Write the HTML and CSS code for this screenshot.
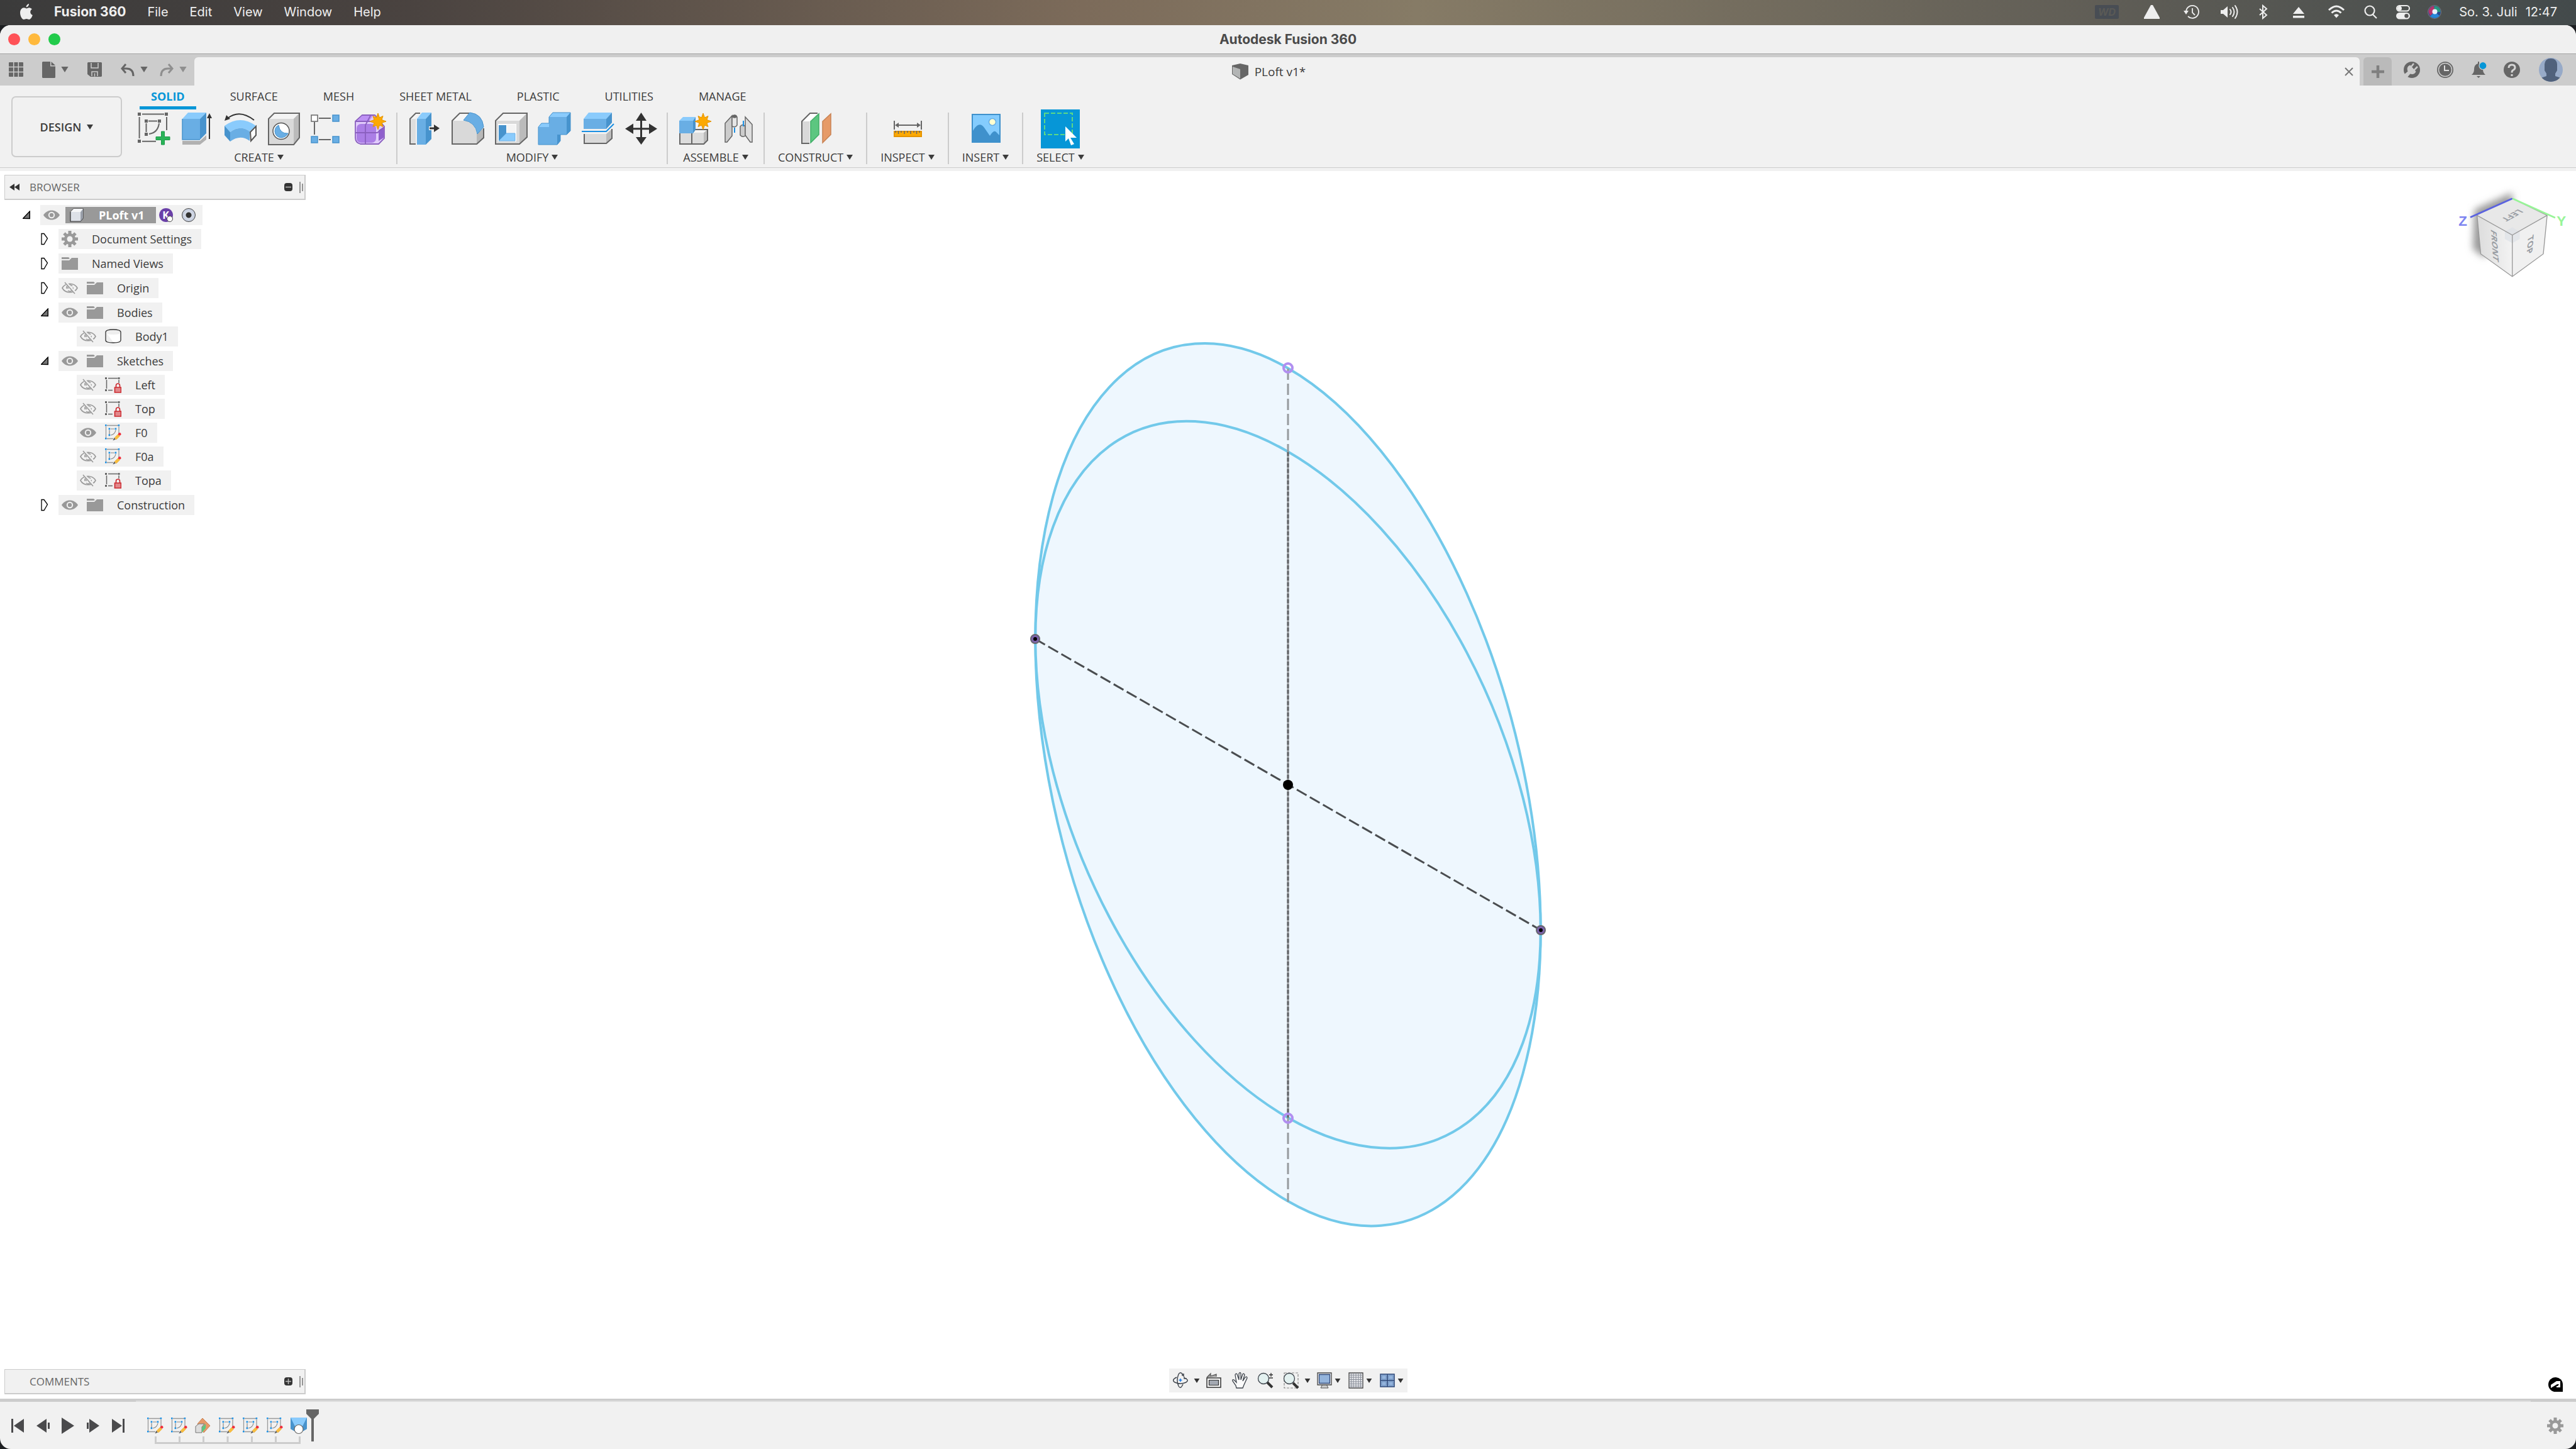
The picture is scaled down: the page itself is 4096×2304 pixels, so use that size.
FILE: index.html
```html
<!doctype html>
<html lang="en">
<head>
<meta charset="utf-8">
<meta name="viewport" content="width=device-width, initial-scale=1.0">
<title>Autodesk Fusion 360</title>
<link rel="stylesheet" href="styles.css">
</head>
<body>

<!-- shared icons -->
<svg class="defs" width="0" height="0">
    <symbol id="i-down" viewBox="0 0 10 8"><path d="M0 0h10L5 8z" fill="currentColor"/></symbol>
    <symbol id="i-eye" viewBox="0 0 26 20">
        <path d="M0 10C6 0 20 0 26 10 20 20 6 20 0 10z" fill="#999"/>
        <circle cx="13" cy="10" r="4.2" fill="#999" stroke="#f1f1f1" stroke-width="2"/>
    </symbol>
    <symbol id="i-hidden" viewBox="0 0 26 20">
        <path d="M1 10C6 1 20 1 25 10 20 19 6 19 1 10z" fill="none" stroke="#999" stroke-width="1.6"/>
        <path d="M8 11a5 5 0 0 1 9-4M10.500 11a2.500 2.500 0 0 1 4-3M18 9a5 5 0 0 1-8 5" fill="none" stroke="#999" stroke-width="1.5"/>
        <path d="M6 1l17 18" stroke="#f1f1f1" stroke-width="4"/>
        <path d="M5 1l16 18" stroke="#999" stroke-width="1.6"/>
    </symbol>
    <symbol id="i-folder" viewBox="0 0 26 22">
        <path d="M0 1h11l2 2-2 1H0zM0 6h12l4-4h10v19H0z" fill="#999"/>
    </symbol>
    <symbol id="i-gear" viewBox="0 0 26 26">
        <g stroke="#999" stroke-width="5"><path d="M13 0v26M0 13h26M4 4l18 18M22 4L4 22"/></g>
        <circle cx="13" cy="13" r="9" fill="#999"/>
        <circle cx="13" cy="13" r="4.500" fill="#f1f1f1"/>
    </symbol>
    <symbol id="i-closed" viewBox="0 0 12 20"><path d="M1 1.500h4L10.500 9 5 18.500H1z" fill="#fff" stroke="#000" stroke-width="1.300"/></symbol>
    <symbol id="i-open" viewBox="0 0 12 14"><path d="M.7 12.300L11.300 1v11.500z" fill="#777" stroke="#000" stroke-width="1.400"/></symbol>
    <symbol id="i-locked" viewBox="0 0 26 26">
        <path d="M5 2.500h15M2.500 5v14M22 5v5M5 21.500h7" stroke="#666" stroke-width="1.500" fill="none"/>
        <path d="M0 1h3v3H0zM20.500 1h3v3h-3zM0 20h3v3H0z" fill="#666"/>
        <path d="M17.500 17v-3a3 3 0 0 1 6 0v3" fill="none" stroke="#cc2b31" stroke-width="1.700"/>
        <path d="M15.500 17h10v8h-10z" fill="#e2888b" stroke="#cc2b31" stroke-width="1.700"/>
    </symbol>
    <symbol id="i-sketch" viewBox="0 0 26 26">
        <path d="M3 1.500h18M1.500 3v18M22 3v12M3 22.500h10" stroke="#999" stroke-width="1.300" fill="none"/>
        <path d="M9 7h6M7 9v7M17 9c-1 5-3 7-8 8" stroke="#888" stroke-width="1.200" fill="none"/>
        <path d="M0 0h2.600v2.600H0zM20.600 0h2.600v2.600h-2.600zM0 21h2.600v2.600H0zM5.600 5.600h2.600v2.600H5.600zM15.600 5.600h2.600v2.600h-2.600zM5.600 15.600h2.600v2.600H5.600z" fill="#1a8fe3"/>
        <path d="M12.500 25.500l2-4.500 2.500 2.500z" fill="#555"/>
        <path d="M15 21l5.500-5.500 3 3L18 24z" fill="#f9bd3f" stroke="#e5a830" stroke-width=".5"/>
        <circle cx="23.200" cy="15.200" r="2.300" fill="#f0303c"/>
    </symbol>
    <symbol id="i-star" viewBox="-13 -13 26 26">
        <path d="M0-13L2.500-6 8-8.500 6-2.500 13 0 6 2.500 8 8.500 2.500 6 0 13-2.500 6-8 8.500-6 2.500-13 0-6-2.500-8-8.500-2.500-6z" fill="#fca903" stroke="#e59400" stroke-width="1"/>
    </symbol>
</svg>

<header class="menubar">
    <nav class="menus">
        <svg class="apple" width="20" height="25" viewBox="0 0 20 25"><path d="M14 0c.3 2.700-1.900 5.300-4.300 5.400C9.400 2.900 11.700.5 14 0zM14.300 6.200c1.900 0 3.600 1 4.600 2.400-4 2.500-3.300 7.800.9 9.500C18.700 21.500 16.700 25 14.300 25c-1.700 0-2.200-1-4.200-1s-2.600 1-4.200 1C3 25 0 19.500 0 14.300 0 9.300 3 6.300 6 6.300c1.800 0 3.100 1.100 4.300 1.100 1.100 0 2.300-1.200 4-1.200z" fill="#eee"/></svg>
        <a class="app" href="#">Fusion 360</a>
        <a href="#">File</a>
        <a href="#">Edit</a>
        <a href="#">View</a>
        <a href="#">Window</a>
        <a href="#">Help</a>
    </nav>
    <div class="status">
        <svg width="48" height="24" viewBox="0 0 48 24"><rect x="5" y="1" width="38" height="22" rx="2" fill="#484d54"/><text class="wd" x="24" y="18" text-anchor="middle">WD</text></svg>
        <svg width="43" height="24" viewBox="0 0 43 24"><path d="M20 1h3l11 20v2H9v-2z" fill="#eee"/></svg>
        <svg width="32" height="24" viewBox="0 0 32 24"><g fill="none" stroke="#eee" stroke-width="1.800"><path d="M7 12a10 10 0 1 1 3 7"/><path d="M17 6v7l4 4"/></g><path d="M3 10h8l-4 6z" fill="#eee"/></svg>
        <svg width="36" height="24" viewBox="0 0 36 24"><path d="M4 9h4l7-6v18l-7-6H4z" fill="#eee"/><g fill="none" stroke="#eee" stroke-width="2" stroke-linecap="round"><path d="M19 8q3 4 0 8M23 5q5 7 0 14M27 2q7 10 0 20"/></g></svg>
        <svg width="19" height="24" viewBox="0 0 19 24"><path d="M4 7l11 10-6 5V2l6 5L4 17" fill="none" stroke="#eee" stroke-width="2"/></svg>
        <svg width="42" height="24" viewBox="0 0 42 24"><path d="M21 4l9 11H12zM12 18h18v3.500H12z" fill="#eee"/></svg>
        <svg width="26" height="24" viewBox="0 0 26 24"><g fill="none" stroke="#eee" stroke-width="3"><path d="M1 9Q13-3 25 9M5.500 13.500q7.500-7 15 0"/></g><path d="M9 17q4-3.500 8 0l-4 4.500z" fill="#eee"/></svg>
        <svg width="30" height="24" viewBox="0 0 30 24"><g fill="none" stroke="#eee" stroke-width="2.200"><circle cx="14" cy="10" r="7.500"/><path d="M19 16l6 6"/></g></svg>
        <svg width="22" height="24" viewBox="0 0 22 24"><rect x="1" y="2" width="20" height="8.500" rx="4.200" fill="none" stroke="#eee" stroke-width="2"/><circle cx="5.500" cy="6.200" r="3.500" fill="#eee"/><rect x="0" y="13" width="22" height="10.500" rx="5.200" fill="#eee"/><circle cx="16.500" cy="18.200" r="3.200" fill="#555"/></svg>
        <svg width="26" height="24" viewBox="0 0 26 24"><circle cx="13" cy="12" r="10.500" fill="#274a8f" stroke="#777" stroke-width="1"/><path d="M3.500 12a9.500 9.500 0 0 1 9-9.500L13 12l-7 6z" fill="#b4346c"/><path d="M12.500 2.500A9.500 9.500 0 0 1 22.500 12L13 12z" fill="#27987f"/><path d="M6 19l7-7 8 6q-7 7-15 1z" fill="#2687d8"/><circle cx="13.500" cy="11.500" r="4" fill="#e8f0fb"/></svg>
        <span>So. 3. Juli</span>
        <span>12:47</span>
    </div>
</header>

<div class="window">
<div class="titlebar">
    <div class="lights"><button class="red" aria-label="Close"></button><button class="amber" aria-label="Minimize"></button><button class="green" aria-label="Zoom"></button></div>
    <h1>Autodesk Fusion 360</h1>
</div>

<div class="quickbar">
    <div class="quick">
        <button aria-label="Data panel"><svg width="23" height="23" viewBox="0 0 23 23"><rect width="23" height="23" rx="1" fill="#666"/><path d="M7.700 0v23M15.300 0v23M0 7.500h23M0 15.500h23" stroke="#ccc" stroke-width="1.500"/></svg></button>
        <button class="file" aria-label="File"><svg width="21" height="26" viewBox="0 0 21 26"><path d="M1 0h12v7.500h8V25l-1 1H1l-1-1V1zM14.500 0L21 6h-6.500z" fill="#666"/></svg><svg width="12" height="9"><use href="#i-down"/></svg></button>
        <button class="save" aria-label="Save"><svg width="23" height="23" viewBox="0 0 23 23"><path d="M1 0h21l1 1v21l-1 1H5l-5-4V1z" fill="#666"/><path d="M6 1v8h11V1M7 22v-7h9v7M11.500 17.500v5" fill="none" stroke="#ccc" stroke-width="1.500"/></svg></button>
        <button class="undo" aria-label="Undo"><svg width="22" height="20" viewBox="0 0 22 20"><path d="M8 1L2 8l6 7M2 8h7q11 0 11 12" fill="none" stroke="#666" stroke-width="3"/></svg><svg width="12" height="9"><use href="#i-down"/></svg></button>
        <button class="redo" aria-label="Redo"><svg width="22" height="20" viewBox="0 0 22 20"><path d="M14 1l6 7-6 7M20 8h-7Q2 8 2 20" fill="none" stroke="#8f8f8f" stroke-width="3"/></svg><svg width="12" height="9"><use href="#i-down"/></svg></button>
    </div>
    <div class="doctab">
        <svg width="26" height="26" viewBox="0 0 26 26"><path d="M0 3L13 0l13 3v15l-13 7.500L0 17z" fill="#666"/><path d="M1 5l12 4v15L1 16.500z" fill="#b3b5b5"/></svg>
        <span>PLoft v1*</span>
        <button class="close" aria-label="Close tab"><svg width="14" height="14" viewBox="0 0 14 14"><path d="M1 1l12 12M13 1L1 13" stroke="#777" stroke-width="2"/></svg></button>
    </div>
    <div class="account">
        <button class="newtab" aria-label="New tab"><svg width="20" height="20" viewBox="0 0 20 20"><path d="M10 0v20M0 10h20" stroke="#808080" stroke-width="4.500"/></svg></button>
        <button aria-label="Extensions"><svg width="26" height="26" viewBox="0 0 26 26"><circle cx="13" cy="13" r="13" fill="#666"/><path d="M2 21l6-5q-3-7 2-9l8 9q-2 4-8 2l-5 6M12 8l4-5M17 13l5-5" fill="#ccc" stroke="#ccc" stroke-width="2.500"/></svg></button>
        <button aria-label="Job status"><svg width="26" height="26" viewBox="0 0 26 26"><circle cx="13" cy="13" r="12" fill="#666" stroke="#666" stroke-width="2"/><circle cx="13" cy="13" r="10.500" fill="none" stroke="#ccc" stroke-width="1.500"/><path d="M12 6v8h7" fill="none" stroke="#ddd" stroke-width="2"/></svg></button>
        <button aria-label="Notifications"><svg width="26" height="26" viewBox="0 0 26 26"><path d="M12 0h2v3q6 2 6 9 0 6 4 9H2q4-3 4-9 0-7 6-9zM10 23h6l-3 3z" fill="#666"/><circle cx="20" cy="6.500" r="6" fill="#0696d7" stroke="#ccc" stroke-width="1.200"/></svg></button>
        <button aria-label="Help"><svg width="26" height="26" viewBox="0 0 26 26"><circle cx="13" cy="13" r="13" fill="#666"/><path d="M8 10q0-5 5-5t5 4.500q0 2.500-3 4-2 1-2 4" fill="none" stroke="#d5d5d5" stroke-width="3"/><path d="M11.500 20h3v3h-3z" fill="#d5d5d5"/></svg></button>
        <button class="avatar" aria-label="Account"><svg width="38" height="38" viewBox="0 0 38 38"><defs><clipPath id="face"><circle cx="19" cy="19" r="19"/></clipPath></defs><g clip-path="url(#face)"><path d="M0 0h38v38H0z" fill="#97aac8"/><path d="M9 10q1-9 10-9t10 9v10l-3 5v4l12 4v6H0v-6l12-4v-4l-3-5z" fill="#50617c"/></g></svg></button>
    </div>
</div>

<div class="ribbon">
    <button class="workspace">DESIGN <svg width="10" height="8"><use href="#i-down"/></svg></button>
    <div class="tools">
        <nav class="tabs">
            <a class="active" href="#">SOLID</a>
            <a href="#">SURFACE</a>
            <a href="#">MESH</a>
            <a href="#">SHEET METAL</a>
            <a href="#">PLASTIC</a>
            <a href="#">UTILITIES</a>
            <a href="#">MANAGE</a>
        </nav>
        <div class="panels">
            <section class="panel first">
                <div class="icons">
                    <button aria-label="Create sketch"><svg viewBox="0 0 52 52"><g fill="none" stroke="#666" stroke-width="2"><path d="M7 2.600h35M2.600 7v34M46 7v21M7 45.800h22M17 13.500h14M13.500 17v14M34 17q-2 15-16 17"/></g><path d="M0 0h5v5H0zM43 0h5v5h-5zM0 43h5v5H0zM11 11h5v5h-5zM32 11h5v5h-5zM11 32h5v5h-5z" fill="#666"/><path d="M37.500 30h5v8.500H51v5h-8.500V51h-5v-7.500H29v-5h8.500z" fill="#29b357" stroke="#1d9a49"/></svg></button>
                    <button aria-label="Extrude"><svg viewBox="0 0 52 52"><path d="M2 45h28l10-9v7l-10 8H2z" fill="#b1b1b1"/><path d="M2 10h28v33H2z" fill="#69aee4"/><path d="M2 10L11 0h29L30 10z" fill="#8acbfc"/><path d="M30 10L40 0v33L30 43z" fill="#4793cd"/><path d="M2 10v33h28" fill="none" stroke="#4793cd" stroke-width="1.500"/><path d="M45 42V8" stroke="#333" stroke-width="2"/><path d="M41 9l4-8 4 8z" fill="#333"/></svg></button>
                    <button aria-label="Revolve"><svg viewBox="0 0 52 52"><path d="M0 21Q25 3 50 21L40 30Q25 19 9 31z" fill="#8acbfc"/><path d="M9 31Q25 19 40 30v15Q25 34 9 46z" fill="#69aee4"/><path d="M0 21l9 10v15L0 36z" fill="#4793cd"/><path d="M41 31l9-9v14l-8 9z" fill="#fff" stroke="#555" stroke-width="2"/><path d="M47 12Q24-6 5 9" fill="none" stroke="#333" stroke-width="2"/><path d="M0 13l3-9 6 6z" fill="#333"/></svg></button>
                    <button aria-label="Hole"><svg viewBox="0 0 52 52"><path d="M1 10L10 1h40v39L41 51H1z" fill="#d9d9d9"/><path d="M1 10L10 1h40l-9 9z" fill="#f4f4f4"/><path d="M41 10l9-9v39L41 51z" fill="#bbb"/><path d="M1 10L10 1h40v39L41 51H1z" fill="none" stroke="#666" stroke-width="2"/><circle cx="21" cy="29.500" r="13" fill="#fff" stroke="#555" stroke-width="1.500"/><path d="M17 20q2 14 15 13-4 7-11 7-9-1-10-10 0-7 6-10z" fill="#69aee4" stroke="#4793cd"/></svg></button>
                    <button aria-label="Pattern"><svg viewBox="0 0 52 52"><path d="M12 9h19M5 15v20M12 43h19" stroke="#666" stroke-width="2"/><path d="M0 4h10v10H0z" fill="#fff" stroke="#666" stroke-width="1.500"/><path d="M34 4h10v10H34zM0 38h10v10H0zM34 38h10v10H34z" fill="#69aee4" stroke="#4793cd" stroke-width="1.500"/></svg></button>
                    <button aria-label="Create form"><svg viewBox="0 0 52 52"><path d="M1 14L12 4h20l15 18v19l-9 9H9q-8-2-8-10z" fill="#e0cbfb" stroke="#8a5fbf" stroke-width="1.800"/><path d="M5 12l7-7h17l-7 10H5z" fill="#bd90f4"/><rect x="3" y="18" width="31" height="30" rx="7" fill="#ab7ee6"/><path d="M38 28l8-5v17l-8 5z" fill="#8f5fcd"/><path d="M1 32h35l11-9M17 50V20l8-15M2 14h30" fill="none" stroke="#8a5fbf" stroke-width="1.800"/><use href="#i-star" x="24" y="1" width="26" height="26"/></svg></button>
                </div>
                <button class="label">CREATE <svg width="10" height="8"><use href="#i-down"/></svg></button>
            </section>
            <section class="panel">
                <div class="icons">
                    <button aria-label="Press pull"><svg viewBox="0 0 52 52"><path d="M12 50H3V10l9-9h7l-8 9h1z" fill="#dedede"/><path d="M3 10l9-9h7l-8 9z" fill="#f4f4f4"/><path d="M12 50H3V10l9-9h7" fill="none" stroke="#666" stroke-width="2"/><path d="M14 10h14v41H14z" fill="#69aee4"/><path d="M14 10l8-10h15l-9 10z" fill="#8acbfc"/><path d="M28 10l9-10v42l-9 9z" fill="#4793cd"/><path d="M33 25h10" stroke="#fff" stroke-width="6"/><path d="M34 25h9" stroke="#333" stroke-width="3"/><path d="M41 19l9 6-9 6z" fill="#333"/></svg></button>
                    <button aria-label="Fillet"><svg viewBox="0 0 52 52"><path d="M1 13L13 1h14l-8 11q17 2 21 21l11-9v16L40 51H1z" fill="#d9d9d9"/><path d="M1 13L13 1h14l-8 12z" fill="#f6f6f6"/><path d="M40 34l11-9v15L40 50z" fill="#b8b8b8"/><path d="M28 1H13L1 13v37h39l11-10V25" fill="none" stroke="#666" stroke-width="2"/><path d="M29 0q20 2 22 23l-10 11Q38 15 19 12z" fill="#69aee4" stroke="#4793cd"/></svg></button>
                    <button aria-label="Shell"><svg viewBox="0 0 52 52"><path d="M1 13L13 1h38v38L39 50H1z" fill="#d9d9d9"/><path d="M1 13L13 1h38L39 13z" fill="#f4f4f4"/><path d="M39 13L51 1v38L39 50z" fill="#bbb"/><path d="M1 13L13 1h38v38L39 50H1z" fill="none" stroke="#666" stroke-width="2"/><path d="M5 18h29v28H5z" fill="#fff"/><path d="M6 20h12v13L6 45z" fill="#4793cd"/><path d="M6 45l12-12h14v12z" fill="#8acbfc" stroke="#69aee4"/><path d="M19 19h14v13H19z" fill="#f4f4f4"/></svg></button>
                    <button aria-label="Combine"><svg viewBox="0 0 52 52"><path d="M0 23l5-6h12V7l6-7h28v29l-6 6H35v10l-5 6H0z" fill="#69aee4"/><path d="M17 7l6-7h28l-6 7zM0 23l5-6h12v6z" fill="#8acbfc"/><path d="M45 7l6-7v29l-6 6zM30 35h5v10l-5 6z" fill="#4793cd"/><path d="M0 23l5-6h12V7l6-7h28v29l-6 6H35v10l-5 6H0z" fill="none" stroke="#4793cd"/></svg></button>
                    <button aria-label="Split body"><svg viewBox="0 0 52 52"><path d="M3 10h36v16H3z" fill="#69aee4"/><path d="M3 10l8-10h37l-9 10z" fill="#8acbfc"/><path d="M39 10l9-10v16l-9 10z" fill="#4793cd"/><path d="M0 30h39l12-12" fill="none" stroke="#1a8fe3" stroke-width="2"/><path d="M4 34h35v15H4z" fill="#d9d9d9"/><path d="M39 34l9-8v15l-9 8z" fill="#bbb"/><path d="M4 34v15h35l9-8V26" fill="none" stroke="#666" stroke-width="2"/></svg></button>
                    <button aria-label="Move"><svg viewBox="0 0 52 52"><path d="M25.500 8v36M8 25.800h36" stroke="#333" stroke-width="3"/><path d="M17 13L25.500 0 34 13zM17 39l8.500 12L34 39zM13 17.500L0 25.800 13 34zM38 17.500l13 8.300L38 34z" fill="#333"/></svg></button>
                </div>
                <button class="label">MODIFY <svg width="10" height="8"><use href="#i-down"/></svg></button>
            </section>
            <section class="panel">
                <div class="icons">
                    <button aria-label="New component"><svg viewBox="0 0 52 52"><path d="M2 32h19v18H2zM21 32h19v18H21z" fill="#dcdcdc"/><path d="M21 32l5-5h20l-6 5z" fill="#f4f4f4"/><path d="M40 32l6-5v17l-6 6z" fill="#bbb"/><path d="M2 32v18h38l6-6V27H26l-5 6v17" fill="none" stroke="#666" stroke-width="2"/><path d="M1 13h22v20H1z" fill="#69aee4"/><path d="M1 13l6-6h20l-4 6z" fill="#8acbfc"/><path d="M23 13l4-6v20l-4 6z" fill="#4793cd"/><use href="#i-star" x="26" y="1" width="26" height="26"/></svg></button>
                    <button aria-label="Joint"><svg viewBox="0 0 52 52"><g stroke="#666" stroke-width="1.500"><path d="M5 17L16 5v32L8 47H5z" fill="#ccc"/><path d="M16 7q4-5 8 0v13q-2 4-8 2z" fill="#e6e6e6"/><ellipse cx="20" cy="6" rx="3" ry="2" fill="#666"/><path d="M29 22q4-5 8 0v15q-4 3-8-1z" fill="#ccc"/><path d="M37 7l11 12v28h-3l-8-11z" fill="#dedede"/></g><path d="M20 24v8M34 13v9" stroke="#1a8fe3" stroke-width="2"/></svg></button>
                </div>
                <button class="label">ASSEMBLE <svg width="10" height="8"><use href="#i-down"/></svg></button>
            </section>
            <section class="panel">
                <div class="icons">
                    <button aria-label="Construction plane"><svg viewBox="0 0 52 52"><path d="M3 14h12v35H3z" fill="#d9d9d9"/><path d="M3 14L16 1h12L15 14z" fill="#fff"/><path d="M15 49H3V14L16 1h12" fill="none" stroke="#666" stroke-width="2"/><path d="M17 14L30 2v33L17 48z" fill="#5cc680" stroke="#3fae66" stroke-width="1.500"/><path d="M36 14L49 2v33L36 48z" fill="#e69a68" stroke="#c98253" stroke-width="1.500"/></svg></button>
                </div>
                <button class="label">CONSTRUCT <svg width="10" height="8"><use href="#i-down"/></svg></button>
            </section>
            <section class="panel">
                <div class="icons">
                    <button aria-label="Measure"><svg viewBox="0 0 52 52"><path d="M4 13v14M47 13v14M8 20h35" stroke="#666" stroke-width="2"/><path d="M5 20l6-4v8zM46 20l-6-4v8z" fill="#666"/><path d="M4 30h43v8H4z" fill="#fca903" stroke="#e59400" stroke-width="2"/><path d="M6 29v3M10.500 29v5M15 29v3M20 29v5M25 29v3M30 29v5M35 29v3M39.500 29v5M44 29v3" stroke="#666" stroke-width="1.500"/></svg></button>
                </div>
                <button class="label">INSPECT <svg width="10" height="8"><use href="#i-down"/></svg></button>
            </section>
            <section class="panel">
                <div class="icons">
                    <button aria-label="Insert image"><svg viewBox="0 0 52 52"><path d="M3 2h46v46H3z" fill="#84ccfe"/><path d="M3 33C11 16 18 17 23 24l9 13c5-8 8-9 11-5l6 6v10H3z" fill="#3f91cc"/><path d="M4 3h44v44H4z" fill="none" stroke="#3f91cc" stroke-width="2"/><circle cx="36" cy="15" r="5.500" fill="#ffffd0" stroke="#69aee4" stroke-width="1.500"/></svg></button>
                </div>
                <button class="label">INSERT <svg width="10" height="8"><use href="#i-down"/></svg></button>
            </section>
            <section class="panel last">
                <div class="icons">
                    <button class="select" aria-label="Select"><svg viewBox="0 0 62 62"><path d="M6 6h44v34H6z" fill="none" stroke="#5cd886" stroke-width="2" stroke-dasharray="7 3"/><path d="M39 27l18 18H47l6 10-5 2-4-11-5 5z" fill="#fff"/></svg></button>
                </div>
                <button class="label">SELECT <svg width="10" height="8"><use href="#i-down"/></svg></button>
            </section>
        </div>
    </div>
</div>

<main class="viewport">
    <!-- the two profiles share the horizontal axis, only the height differs -->
    <svg class="sketch" viewBox="0 2 4096 1952">
        <g class="profile">
            <circle r="1" transform="matrix(401.700 231.700 0 662.300 2048 977.700)"/>
            <circle r="1" transform="matrix(401.700 231.700 0 529.500 2048 977.700)"/>
        </g>
        <path class="axis light" d="M2048 316V449M2048 1507V1641"/>
        <path class="axis base" d="M2048 449V1507"/>
        <path class="axis fine" d="M2048 449V1507"/>
        <path class="axis" d="M1646 746L2450 1209"/>
        <g class="handle"><circle cx="2048" cy="315" r="7"/><circle cx="2048" cy="1508" r="7"/></g>
        <g class="endpoint"><circle cx="1646" cy="746" r="7"/><circle cx="2450" cy="1209" r="7"/></g>
        <g><circle cx="1646" cy="746" r="3"/><circle cx="2450" cy="1209" r="3"/><circle cx="2048" cy="978" r="8"/></g>
    </svg>

    <div class="side">
        <div class="browser">
            <div class="palette">
                <svg class="collapse" width="16" height="11" viewBox="0 0 16 11"><path d="M8 0v11L0 5.500zM16 0v11L8 5.500z" fill="#333"/></svg>
                <h2>BROWSER</h2>
                <button aria-label="Collapse all"><svg width="13" height="13" viewBox="0 0 13 13"><rect width="13" height="13" rx="4" fill="#333"/><path d="M2 6.500h9" stroke="#bbb" stroke-width="1.500"/></svg></button>
                <svg class="grip" width="6" height="18" viewBox="0 0 6 18"><path d="M1 0v18M5 3v12" stroke="#777" stroke-width="1.500"/></svg>
            </div>
            <ul class="tree">
                <li>
                    <div class="node"><button class="twist" aria-label="Collapse"><svg width="12" height="14"><use href="#i-open"/></svg></button>
                        <div class="item root"><svg width="26" height="20"><use href="#i-eye"/></svg>
                            <span class="current"><svg width="22" height="22" viewBox="0 0 22 22"><path d="M1 6l5-5h15v15l-4 5H1z" fill="#dde1e8" stroke="#333" stroke-width="1.200"/><path d="M17 21V6l4-5v15z" fill="#9aa0aa"/><path d="M1 6l5-5h15l-4 5z" fill="#f6f7f9"/></svg>PLoft v1</span>
                            <span class="badge">K</span>
                            <input type="radio" checked aria-label="Activate component">
                        </div>
                    </div>
                    <ul>
                        <li><div class="node"><button class="twist" aria-label="Expand"><svg width="12" height="20"><use href="#i-closed"/></svg></button><div class="item"><svg width="26" height="26"><use href="#i-gear"/></svg><span>Document Settings</span></div></div></li>
                        <li><div class="node"><button class="twist" aria-label="Expand"><svg width="12" height="20"><use href="#i-closed"/></svg></button><div class="item"><svg width="26" height="22"><use href="#i-folder"/></svg><span>Named Views</span></div></div></li>
                        <li><div class="node"><button class="twist" aria-label="Expand"><svg width="12" height="20"><use href="#i-closed"/></svg></button><div class="item"><svg width="26" height="20"><use href="#i-hidden"/></svg><svg width="26" height="22"><use href="#i-folder"/></svg><span>Origin</span></div></div></li>
                        <li><div class="node"><button class="twist" aria-label="Collapse"><svg width="12" height="14"><use href="#i-open"/></svg></button><div class="item"><svg width="26" height="20"><use href="#i-eye"/></svg><svg width="26" height="22"><use href="#i-folder"/></svg><span>Bodies</span></div></div>
                            <ul class="leaf">
                                <li><div class="item"><svg width="26" height="20"><use href="#i-hidden"/></svg><svg width="26" height="24" viewBox="0 0 26 24"><path d="M1 5Q1 1 13 1t12 4v13q0 4-12 4T1 18z" fill="#eee" stroke="#333" stroke-width="1.300"/><path d="M2 6q0 3 11 3t11-3v12q-1 3-11 3z" fill="#fff"/></svg><span>Body1</span></div></li>
                            </ul>
                        </li>
                        <li><div class="node"><button class="twist" aria-label="Collapse"><svg width="12" height="14"><use href="#i-open"/></svg></button><div class="item"><svg width="26" height="20"><use href="#i-eye"/></svg><svg width="26" height="22"><use href="#i-folder"/></svg><span>Sketches</span></div></div>
                            <ul class="leaf">
                                <li><div class="item"><svg width="26" height="20"><use href="#i-hidden"/></svg><svg width="26" height="26"><use href="#i-locked"/></svg><span>Left</span></div></li>
                                <li><div class="item"><svg width="26" height="20"><use href="#i-hidden"/></svg><svg width="26" height="26"><use href="#i-locked"/></svg><span>Top</span></div></li>
                                <li><div class="item"><svg width="26" height="20"><use href="#i-eye"/></svg><svg width="26" height="26"><use href="#i-sketch"/></svg><span>F0</span></div></li>
                                <li><div class="item"><svg width="26" height="20"><use href="#i-hidden"/></svg><svg width="26" height="26"><use href="#i-sketch"/></svg><span>F0a</span></div></li>
                                <li><div class="item"><svg width="26" height="20"><use href="#i-hidden"/></svg><svg width="26" height="26"><use href="#i-locked"/></svg><span>Topa</span></div></li>
                            </ul>
                        </li>
                        <li><div class="node"><button class="twist" aria-label="Expand"><svg width="12" height="20"><use href="#i-closed"/></svg></button><div class="item"><svg width="26" height="20"><use href="#i-eye"/></svg><svg width="26" height="22"><use href="#i-folder"/></svg><span>Construction</span></div></div></li>
                    </ul>
                </li>
            </ul>
        </div>
        <div class="palette comments">
            <h2>COMMENTS</h2>
            <button aria-label="Open comments"><svg width="13" height="13" viewBox="0 0 13 13"><rect width="13" height="13" rx="4" fill="#333"/><path d="M2 6.500h9M6.500 2v9" stroke="#bbb" stroke-width="1.500"/></svg></button>
            <svg class="grip" width="6" height="18" viewBox="0 0 6 18"><path d="M1 0v18M5 3v12" stroke="#777" stroke-width="1.500"/></svg>
        </div>
    </div>

    <div class="navbar">
        <button class="wide" aria-label="Orbit"><svg width="24" height="26" viewBox="0 0 24 26"><g fill="none" stroke="#3d434b" stroke-width="1.400"><path d="M16 4Q12-2 9 3 5 13 9 22q3 5 6-1l1-2M6 8Q-3 12 3 16q9 4 18 0 4-3 1-5l-3-2M14 4l3 2V2M18 7v3h4"/></g><path d="M12 10v5M9.500 12.500h5" stroke="#1a78e3" stroke-width="1.500"/></svg><svg width="10" height="7"><use href="#i-down"/></svg></button>
        <button aria-label="Look at"><svg width="24" height="26" viewBox="0 0 24 26"><path d="M1 8l6-6v4l9-3v4" fill="#999" stroke="#555" stroke-width="1.200"/><path d="M1 9h22v15H1z" fill="#f7f7f7" stroke="#333" stroke-width="1.500"/><path d="M4.500 12.500h15v8h-15z" fill="#a3a8b1" stroke="#333" stroke-width="1.200"/></svg></button>
        <button aria-label="Pan"><svg width="24" height="26" viewBox="0 0 24 26"><path d="M7 25L6 21 1 14q-1-3 2-2l4 4L5 4q1-3 3-1l3 9V2q2-3 3 0v10l3-9q2-2 3 1l-3 10 4-6q3-2 3 1l-5 11-2 5z" fill="#fbfbfb" stroke="#3d434b" stroke-width="1.300"/></svg></button>
        <button aria-label="Zoom"><svg width="24" height="26" viewBox="0 0 24 26"><path d="M15 16l8 8" stroke="#333" stroke-width="4"/><circle cx="9" cy="10" r="8.500" fill="#e3f1f0" stroke="#3d434b" stroke-width="1.300"/><path d="M18 4h6M21 1v6M18 9h6" stroke="#333" stroke-width="1.300"/></svg></button>
        <button class="wide" aria-label="Fit"><svg width="24" height="26" viewBox="0 0 24 26"><path d="M1 1h22v24H1z" fill="none" stroke="#888" stroke-width="1.200" stroke-dasharray="4 2"/><path d="M15 17l8 8" stroke="#333" stroke-width="4"/><circle cx="9" cy="10" r="8.500" fill="#e3f1f0" stroke="#3d434b" stroke-width="1.300"/></svg><svg width="10" height="7"><use href="#i-down"/></svg></button>
        <button class="tight" aria-label="Display settings"><svg width="24" height="26" viewBox="0 0 24 26"><path d="M9 19h6l3 6H6z" fill="#ccc" stroke="#555"/><path d="M1 1h22v19H1z" fill="#f8f8f8" stroke="#444" stroke-width="1.300"/><path d="M3.500 3.500h17v14h-17z" fill="#94b4dc" stroke="#2d4676" stroke-width="1.300"/></svg><svg width="10" height="7"><use href="#i-down"/></svg></button>
        <button class="tight" aria-label="Grid and snaps"><svg width="24" height="26" viewBox="0 0 24 26"><path d="M1 1h22v24H1z" fill="#e8e9ec" stroke="#444" stroke-width="1.300"/><path d="M4.500 1v24M8 1v24M12 1v24M16 1v24M19.500 1v24M1 4.500h22M1 8h22M1 11.500h22M1 15h22M1 18.500h22M1 22h22" stroke="#888d98"/></svg><svg width="10" height="7"><use href="#i-down"/></svg></button>
        <button class="tight" aria-label="Viewports"><svg width="24" height="22" viewBox="0 0 24 22"><path d="M1 1h22v20H1zM12 1v20M1 11h22" fill="#94b4dc" stroke="#2d4676" stroke-width="1.500"/><path d="M3 3h7v6H3zM14 3h7v6h-7zM3 13h7v6H3zM14 13h7v6h-7z" fill="none" stroke="#6f90bf"/></svg><svg width="10" height="7"><use href="#i-down"/></svg></button>
    </div>

    <div class="corner">
        <svg class="viewcube" width="224" height="176" viewBox="0 0 840 660">
            <defs>
                <filter id="soft" x="-30%" y="-30%" width="160%" height="160%"><feGaussianBlur stdDeviation="22"/></filter>
                <linearGradient id="left" x1="0" x2="1"><stop offset="0" stop-color="#dcdcdc"/><stop offset="1" stop-color="#f3f3f3"/></linearGradient>
            </defs>
            <path d="M460 65L235 165 225 400 290 450 460 300z" fill="#999" filter="url(#soft)"/>
            <path d="M460 100L668 200 460 318 250 200z" fill="#e8e8e8"/>
            <path d="M250 200l210 118v247L272 430z" fill="url(#left)"/>
            <path d="M668 200L460 318v247l185-135z" fill="#f0f0f0"/>
            <path d="M460 272l44 25v44l-44 25-44-25v-44z" fill="#dde1e7" opacity=".7"/>
            <path d="M668 200L460 318 250 200l22 230 188 135 185-135zM460 318v247M460 100l208 100" fill="none" stroke="#999" stroke-width="5"/>
            <path d="M210 212L460 100" stroke="#5a62e0" stroke-width="10"/>
            <path d="M462 100l254 115" stroke="#98f598" stroke-width="10"/>
            <g class="faces">
                <text transform="matrix(-.87 .49 -.87 -.43 460 200)" y="18">LEFT</text>
                <text transform="matrix(.08 1 -.87 -.49 355 382)" y="18">FRONT</text>
                <text transform="matrix(-.07 1 -.87 .49 566 376)" y="18">TOP</text>
            </g>
            <text class="z" x="165" y="262">Z</text>
            <text class="y" x="753" y="262">Y</text>
        </svg>
        <button class="assist" aria-label="Assistant"><svg width="23" height="23" viewBox="0 0 23 23"><path d="M11.500 0A11.500 11.500 0 0 1 23 11.500V23H11.500a11.500 11.500 0 0 1 0-23z" fill="#000"/><path d="M4 12l9-6h6v10h-6v-2h2l2-3h-3l-10 6z" fill="#fff"/></svg></button>
    </div>
</main>

<footer class="timeline">
    <div class="playback">
        <button aria-label="First"><svg width="20" height="22" viewBox="0 0 20 22"><path d="M0 0h3v22H0zM20 0v22L4 11z" fill="#4a4a4c"/></svg></button>
        <button aria-label="Previous"><svg width="20" height="22" viewBox="0 0 20 22"><path d="M16 0v22L0 11zM18 6h3v10h-3z" fill="#4a4a4c"/></svg></button>
        <button aria-label="Play"><svg width="20" height="26" viewBox="0 0 20 26"><path d="M0 0l20 13L0 26z" fill="#4a4a4c"/></svg></button>
        <button aria-label="Next"><svg width="20" height="22" viewBox="0 0 20 22"><path d="M4 0v22l16-11zM0 6h3v10H0z" fill="#4a4a4c"/></svg></button>
        <button aria-label="Last"><svg width="20" height="22" viewBox="0 0 20 22"><path d="M17 0h3v22h-3zM0 0v22l16-11z" fill="#4a4a4c"/></svg></button>
    </div>
    <div class="history">
        <div class="features">
            <div class="steps">
                <button aria-label="Sketch"><svg width="26" height="26"><use href="#i-sketch"/></svg></button>
                <button aria-label="Sketch"><svg width="26" height="26"><use href="#i-sketch"/></svg></button>
                <button aria-label="Plane"><svg width="26" height="26" viewBox="0 0 26 26"><path d="M12 1l12 12-10 11L4 10z" fill="#e69a68" stroke="#c98253"/><path d="M1 14l5-4h9l-4 5v9H1z" fill="#ddd" stroke="#777"/><path d="M11 16l6-6v7l-6 7z" fill="#5cc680"/></svg></button>
                <button aria-label="Sketch"><svg width="26" height="26"><use href="#i-sketch"/></svg></button>
                <button aria-label="Sketch"><svg width="26" height="26"><use href="#i-sketch"/></svg></button>
                <button aria-label="Sketch"><svg width="26" height="26"><use href="#i-sketch"/></svg></button>
                <button aria-label="Loft"><svg width="26" height="26" viewBox="0 0 26 26"><path d="M0 0h26v18l-7 4H7l-7-4z" fill="#69aee4"/><path d="M0 0h26l-7 14H7z" fill="#8acbfc"/><path d="M0 0l7 14v8l-7-4zM26 0l-7 14v8l7-4z" fill="#4793cd"/><circle cx="13" cy="18.500" r="7" fill="#fff" stroke="#666" stroke-width="1.200"/></svg></button>
            </div>
            <svg width="232" height="12" viewBox="0 0 232 12"><path d="M1.500 0v10.500h229V0M39.500 0v10M77.500 0v10M116 0v10M154.500 0v10M192.500 0v10" fill="none" stroke="#ccc" stroke-width="3"/></svg>
        </div>
        <svg class="marker" width="20" height="51" viewBox="0 0 20 51"><path d="M0 0h20v7l-8 8v36H8V15L0 7z" fill="#666"/></svg>
    </div>
    <div class="settings"><button aria-label="Timeline settings"><svg width="26" height="26"><use href="#i-gear"/></svg></button></div>
</footer>
</div>

</body>
</html>
```
FILE: styles.css
```css
* {
    box-sizing: border-box;
}
body {
    margin: 0;
    min-height: 100vh;
    display: flex;
    flex-direction: column;
    background: #1d1f22;
    color: #3c3c3c;
    font: 18px/22px "Open Sans", "Noto Sans", sans-serif;
}
button {
    display: flex;
    align-items: center;
    margin: 0;
    padding: 0;
    border: 0;
    background: none;
    color: inherit;
    font: inherit;
}
svg {
    display: block;
    flex: none;
    overflow: visible;
}
a {
    color: inherit;
    text-decoration: none;
}
h1, h2, ul {
    margin: 0;
    padding: 0;
    list-style: none;
    font-weight: normal;
}
.defs {
    position: absolute;
}

/* system menu bar */
.menubar {
    height: 40px;
    padding: 0 30px 3px 32px;
    display: flex;
    justify-content: space-between;
    align-items: center;
    background: linear-gradient(90deg, #3b3b3b 0%, #4a4340 16%, #7c6b5a 42%, #867b66 55%, #625f57 80%, #434a4b 100%);
    color: #efefef;
    font: 20px/26px Inter, sans-serif;
}
.menus {
    display: flex;
    align-items: center;
    gap: 34px;
}
.app {
    font-size: 21px;
    font-weight: 700;
}
.status {
    display: flex;
    align-items: center;
    gap: 26px;
}
.status span:last-child {
    margin-left: -13px;
}
.wd {
    font: italic 700 16px Inter, sans-serif;
    fill: #5a5a56;
}

/* window frame */
.window {
    flex: 1;
    display: flex;
    flex-direction: column;
    overflow: hidden;
    border-radius: 17px;
    background: #f1f1f1;
}
.titlebar {
    height: 46px;
    display: grid;
    grid-template-columns: 1fr auto 1fr;
    align-items: center;
    border-bottom: 1px solid #a3a3a3;
    background: #f0f0f0;
}
.titlebar h1 {
    color: #4a4a4a;
    font: 700 21px/26px Inter, sans-serif;
}
.lights {
    display: flex;
    gap: 13px;
    padding-left: 13px;
}
.lights button {
    width: 19px;
    height: 19px;
    border-radius: 50%;
}
.red {
    background: #ff5257;
}
.amber {
    background: #ffb93c;
}
.green {
    background: #22cb4b;
}

/* quick access and document tabs */
.quickbar {
    height: 50px;
    padding-top: 5px;
    display: flex;
    background: #ccc;
    color: #666;
}
.quick {
    width: 309px;
    padding: 0 0 6px 14px;
    display: flex;
    align-items: center;
    gap: 30px;
}
.quick button {
    gap: 9px;
}
.quick .redo {
    margin-left: -11px;
    color: #8f8f8f;
}
.doctab {
    flex: 1;
    display: grid;
    grid-template-columns: 1fr auto 1fr;
    align-items: center;
    border-radius: 6px 6px 0 0;
    background: #f1f1f1;
    color: #3c3c3c;
    font-size: 19px;
}
.doctab > svg {
    justify-self: end;
}
.close {
    justify-self: end;
    margin-right: 10px;
}
.doctab span {
    margin-left: 10px;
}
.account {
    display: flex;
    align-items: center;
    gap: 27px;
    padding: 0 21px 6px 6px;
}
.newtab {
    align-self: flex-start;
    width: 45px;
    height: 45px;
    margin-right: -8px;
    justify-content: center;
    border-radius: 6px 6px 0 0;
    background: #bababa;
}
.avatar {
    margin-left: 3px;
}

/* ribbon */
.ribbon {
    height: 131px;
    display: flex;
    align-items: flex-start;
    gap: 25px;
    padding-left: 18px;
    border-bottom: 1px solid #ccc;
}
.workspace {
    width: 176px;
    height: 97px;
    margin-top: 17px;
    justify-content: center;
    gap: 9px;
    border: 2px solid #ccc;
    border-radius: 7px;
    font-weight: 600;
}
.tabs {
    display: flex;
    gap: 36px;
    padding-left: 3px;
}
.tabs a {
    padding: 5px 18px 4px;
    border-bottom: 5px solid transparent;
    line-height: 24px;
}
.tabs .active {
    border-color: #0696d7;
    color: #0696d7;
    font-weight: 700;
}
.panels {
    display: flex;
    margin-top: 5px;
}
.panel {
    display: flex;
    flex-direction: column;
    align-items: center;
    border-right: 2px solid #ccc;
}
.panel.last {
    border: 0;
}
.icons {
    height: 52px;
    display: flex;
    align-items: center;
    gap: 17px;
    padding: 0 14px 0 17px;
}
.first .icons {
    padding-left: 0;
}
.first .label {
    margin-right: 26px;
}
.panel.last .icons {
    padding: 0;
}
.icons svg {
    width: 52px;
    height: 52px;
}
.icons .select svg {
    width: 62px;
    height: 62px;
    background: #0696d7;
}
.label {
    gap: 5px;
    margin-top: 8px;
    padding: 0 21px;
}

/* canvas */
.viewport {
    position: relative;
    flex: 1;
    display: grid;
    grid-template-columns: 1fr auto 1fr;
    border-top: 5px solid #f1f1f1;
    background: #fff;
}
.sketch {
    position: absolute;
    inset: 0;
    width: 100%;
    height: 100%;
}
.profile circle {
    fill: #eef7fe;
    stroke: #72c9ea;
    stroke-width: 4px;
    vector-effect: non-scaling-stroke;
}
.axis {
    fill: none;
    stroke: #4a4d50;
    stroke-width: 3px;
    stroke-dasharray: 18 6;
}
.axis.light {
    stroke: #969a9d;
}
.axis.base {
    stroke: #999c9f;
    stroke-dasharray: none;
}
.axis.fine {
    stroke: #606366;
    stroke-dasharray: 6 3;
}
.handle {
    fill: none;
    stroke: #b18ff0;
    stroke-width: 4px;
}
.endpoint {
    fill: #7c62ac;
    stroke: #66666e;
    stroke-width: 2px;
}
.side, .corner {
    position: relative;
    display: flex;
    flex-direction: column;
    justify-content: space-between;
}
.side {
    align-items: flex-start;
    padding: 6px 0 7px 7px;
}
.corner {
    align-items: flex-end;
    padding: 17px 0 11px;
}
.palette {
    width: 479px;
    height: 40px;
    padding: 0 2px 0 7px;
    display: flex;
    align-items: center;
    border: solid #ccc;
    border-width: 1px 2px 2px 1px;
    background: #f1f1f1;
    color: #666;
}
.palette h2 {
    flex: 1;
    margin-left: 16px;
    font-size: 17px;
    line-height: 22px;
}
.comments h2 {
    margin-left: 32px;
}
.grip {
    margin-left: 11px;
}

/* browser tree */
.tree {
    padding: 8px 0 0 29px;
}
.tree ul {
    display: flex;
    flex-direction: column;
    gap: 7px;
    margin-top: 6px;
    padding-left: 29px;
}
.tree ul.leaf {
    gap: 6px;
    padding-left: 57px;
}
.node {
    display: flex;
}
.twist {
    width: 28px;
}
.item {
    width: max-content;
    height: 32px;
    display: flex;
    align-items: center;
    gap: 14px;
    padding: 0 15px 0 5px;
    background: #f1f1f1;
}
.item > span {
    margin-left: 8px;
}
.item.root {
    gap: 0;
    padding-right: 11px;
}
.item .current {
    height: 26px;
    margin-left: 9px;
    padding: 0 18px 0 7px;
    display: flex;
    align-items: center;
    gap: 24px;
    background: #999;
    color: #fff;
    font-weight: 700;
}
.item .badge {
    position: relative;
    width: 22px;
    height: 22px;
    margin: 0 14px 0 5px;
    border-radius: 50%;
    background: #6a40a8;
    color: #fff;
    font-size: 16px;
    font-weight: 700;
    text-align: center;
}
.badge::after {
    content: "";
    position: absolute;
    right: 0;
    bottom: 0;
    width: 8px;
    height: 8px;
    border: 1px solid #444;
    border-radius: 50%;
    background: #fff;
}
.item input {
    appearance: none;
    width: 22px;
    height: 22px;
    margin: 0;
    border: 1px solid #444;
    border-radius: 50%;
    background: radial-gradient(#333 0 4px, #d5dbe8 5px, #b5bfd3 100%);
}

/* navigation bar */
.navbar {
    position: relative;
    align-self: end;
    height: 38px;
    margin-bottom: 10px;
    padding: 0 6px;
    display: flex;
    align-items: center;
    gap: 17px;
    background: #f1f1f1;
    color: #333;
}
.navbar .wide {
    gap: 9px;
    margin-right: -7px;
}
.navbar .tight {
    gap: 4px;
    margin-right: -5px;
}
.navbar .tight:last-child {
    margin-right: 0;
}

/* view cube */
.faces text {
    fill: #9a9ea4;
    font: 700 54px "Open Sans", sans-serif;
    text-anchor: middle;
}
.z, .y {
    font: 700 84px "Liberation Sans", sans-serif;
    text-anchor: middle;
}
.z {
    fill: #7d84f0;
}
.y {
    fill: #98f598;
}
.assist {
    margin-right: 21px;
}

/* timeline */
.timeline {
    height: 80px;
    display: flex;
    border-top: 3px solid #ccc;
}
.timeline > div {
    display: flex;
    align-items: center;
    border-top: 2px solid #ccc;
}
.playback {
    width: 216px;
    padding: 0 19px 0 18px;
    gap: 20px;
}
.timeline .history {
    flex: 1;
    padding-left: 18px;
    border-color: #ddd;
}
.features {
    padding-top: 16px;
}
.steps {
    display: flex;
    gap: 12px;
    margin-bottom: 4px;
}
.features > svg {
    margin-left: 12px;
}
.marker {
    margin-left: -1px;
}
.settings {
    width: 72px;
    padding-left: 26px;
}
```
